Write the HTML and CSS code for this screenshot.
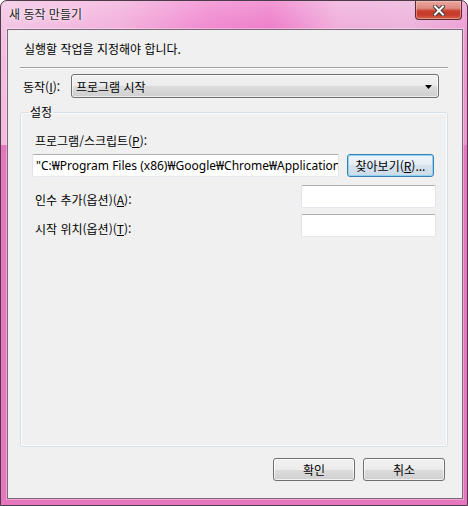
FILE: index.html
```html
<!DOCTYPE html>
<html lang="ko">
<head>
<meta charset="utf-8">
<title>새 동작 만들기</title>
<link rel="stylesheet" href="styles.css">
</head>
<body>
<div class="window">
  <div class="titlebar">
    <span class="title">새 동작 만들기</span>
    <div class="close">
      <svg width="12" height="11" viewBox="0 0 12 11">
        <path d="M2 1.5 L10 9.5 M10 1.5 L2 9.5" stroke="#3b3b3b" stroke-width="4" stroke-linecap="square" fill="none"/>
        <path d="M2 1.5 L10 9.5 M10 1.5 L2 9.5" stroke="#ffffff" stroke-width="2" stroke-linecap="square" fill="none"/>
      </svg>
    </div>
  </div>
  <div class="client">
    <p class="instruction">실행할 작업을 지정해야 합니다.</p>
    <div class="sep"></div>
    <div class="action-row">
      <span class="action-label">동작(<u>I</u>):</span>
      <div class="combo">
        <span class="combo-text">프로그램 시작</span>
        <svg class="combo-arrow" width="7" height="4" viewBox="0 0 7 4"><path d="M0 0 H7 L3.5 4 Z" fill="#000"/></svg>
      </div>
    </div>
    <fieldset class="group">
      <legend class="group-title">설정</legend>
      <div class="field-label">프로그램/스크립트(<u>P</u>):</div>
      <div class="prog-row">
        <div class="textbox wide"><span class="tb-text">"C:₩Program Files (x86)₩Google₩Chrome₩Application₩chrome.exe"</span></div>
        <div class="btn browse">찾아보기(<u>R</u>)...</div>
      </div>
      <div class="opt-row">
        <span class="opt-label">인수 추가(옵션)(<u>A</u>):</span>
        <div class="textbox small"></div>
      </div>
      <div class="opt-row second">
        <span class="opt-label">시작 위치(옵션)(<u>T</u>):</span>
        <div class="textbox small"></div>
      </div>
    </fieldset>
    <div class="buttons">
      <div class="btn std">확인</div>
      <div class="btn std">취소</div>
    </div>
  </div>
</div>
</body>
</html>
```
FILE: styles.css
```css
html, body {
  margin: 0;
  padding: 0;
}
body {
  width: 468px;
  height: 506px;
  overflow: hidden;
  font-family: "Noto Sans CJK KR", "Noto Sans", sans-serif;
  font-size: 12px;
  color: #000;
  background: #fff;
}
.window {
  box-sizing: border-box;
  width: 468px;
  height: 506px;
  border: 1px solid #4b3c48;
  border-radius: 7px 7px 0 0;
  padding: 0 4px 6px 6px;
  display: flex;
  flex-direction: column;
  background:
    linear-gradient(to bottom, rgba(0,0,0,0) 144px, #e676be 144px),
    linear-gradient(to bottom, rgba(255,255,255,0.3) 0px, rgba(255,255,255,0.05) 40px, rgba(255,255,255,0) 100px),
    linear-gradient(to right, #f1bde0 0%, #f1a6d8 25%, #ee78c8 45%, #ec6cc2 58%, #eea2d6 72%, #e9a8d7 88%, #ec92cf 100%);
  background-color: #ea80c6;
  overflow: hidden;
}
.titlebar {
  flex: none;
  height: 28px;
  display: flex;
  align-items: flex-start;
}
.title {
  margin: 5px 0 0 2px;
  line-height: 16px;
  color: #1a1a1a;
  text-shadow: 0 0 5px rgba(255,255,255,0.9), 0 0 2px rgba(255,255,255,0.7);
}
.close {
  margin-left: auto;
  margin-right: 1px;
  box-sizing: border-box;
  width: 47px;
  height: 19px;
  border: 1px solid #5a2b30;
  border-top: none;
  border-radius: 0 0 4px 4px;
  background: linear-gradient(to bottom, #e9a79f 0%, #df8a80 40%, #c9402f 55%, #c63a2a 75%, #d8624e 100%);
  box-shadow: inset 0 0 0 1px rgba(255,210,200,0.45);
  display: flex;
  align-items: center;
  justify-content: center;
}
.client {
  flex: 1;
  border: 1px solid #7b6877;
  box-shadow: 0 0 0 1px rgba(255,255,255,0.35);
  background: #f0f0f0;
  padding: 11px 14px 0 12px;
  display: flex;
  flex-direction: column;
  min-height: 0;
}
.instruction {
  margin: 0;
  padding-left: 4px;
  line-height: 16px;
  height: 16px;
}
.sep {
  margin-top: 10px;
  height: 0;
  border-top: 1px solid #a0a0a0;
  border-bottom: 1px solid #ffffff;
}
.action-row {
  margin-top: 5px;
  display: flex;
  align-items: flex-start;
}
.action-label {
  width: 48px;
  padding-left: 3px;
  margin-top: 5px;
  line-height: 16px;
}
.combo {
  box-sizing: border-box;
  width: 368px;
  height: 24px;
  border: 1px solid #707070;
  border-radius: 3px;
  background: linear-gradient(to bottom, #f2f2f2 0%, #ebebeb 50%, #dddddd 50%, #cfcfcf 100%);
  box-shadow: inset 0 0 0 1px rgba(255,255,255,0.6);
  display: flex;
  align-items: center;
  padding: 1px 6px 0 4px;
}
.combo-text {
  flex: 1;
  line-height: 16px;
}
.combo-arrow {
  display: block;
}
.group {
  flex: 1;
  margin: 6px 0 0 0;
  padding: 0 11px;
  min-width: 0;
  border: 1px solid #d5dfe5;
  border-radius: 3px;
  box-shadow: inset 0 0 0 1px rgba(255,255,255,0.8);
}
.group-title {
  padding: 0 1px;
  margin-left: -3px;
  line-height: 16px;
}
.field-label {
  margin-top: 13px;
  padding-left: 3px;
  line-height: 16px;
}
.prog-row {
  margin-top: 5px;
  display: flex;
  gap: 8px;
}
.textbox {
  box-sizing: border-box;
  height: 23px;
  background: #fff;
  border: 1px solid;
  border-color: #abadb3 #e2e3ea #e3e9ef #e2e3ea;
  border-radius: 2px;
  overflow: hidden;
  white-space: nowrap;
}
.textbox.wide {
  width: 307px;
  padding-left: 3px;
  line-height: 20px;
}
.textbox.small {
  width: 135px;
  margin-left: auto;
}
.tb-text {
  font-family: "Noto Sans", "Noto Sans CJK KR", sans-serif;
}
.btn {
  box-sizing: border-box;
  height: 23px;
  border: 1px solid #707070;
  border-radius: 3px;
  display: flex;
  align-items: center;
  justify-content: center;
  line-height: 16px;
  padding-top: 1px;
  white-space: nowrap;
}
.btn.std {
  width: 82px;
  background: linear-gradient(to bottom, #f2f2f2 0%, #ebebeb 50%, #dddddd 50%, #cfcfcf 100%);
  box-shadow: inset 0 0 0 1px rgba(255,255,255,0.7);
}
.btn.browse {
  width: 87px;
  border-color: #3c7fb1;
  background: linear-gradient(to bottom, #eef4f9 0%, #e4edf4 50%, #d4e2ed 50%, #cddce8 100%);
  box-shadow: inset 0 0 0 1px #8fd4f4;
}
.opt-row {
  margin-top: 8px;
  display: flex;
  align-items: flex-start;
}
.opt-row.second {
  margin-top: 6px;
}
.opt-label {
  padding-left: 3px;
  margin-top: 7px;
  line-height: 16px;
}
.buttons {
  margin: 11px 3px 17px 0;
  display: flex;
  justify-content: flex-end;
  gap: 8px;
}
```
